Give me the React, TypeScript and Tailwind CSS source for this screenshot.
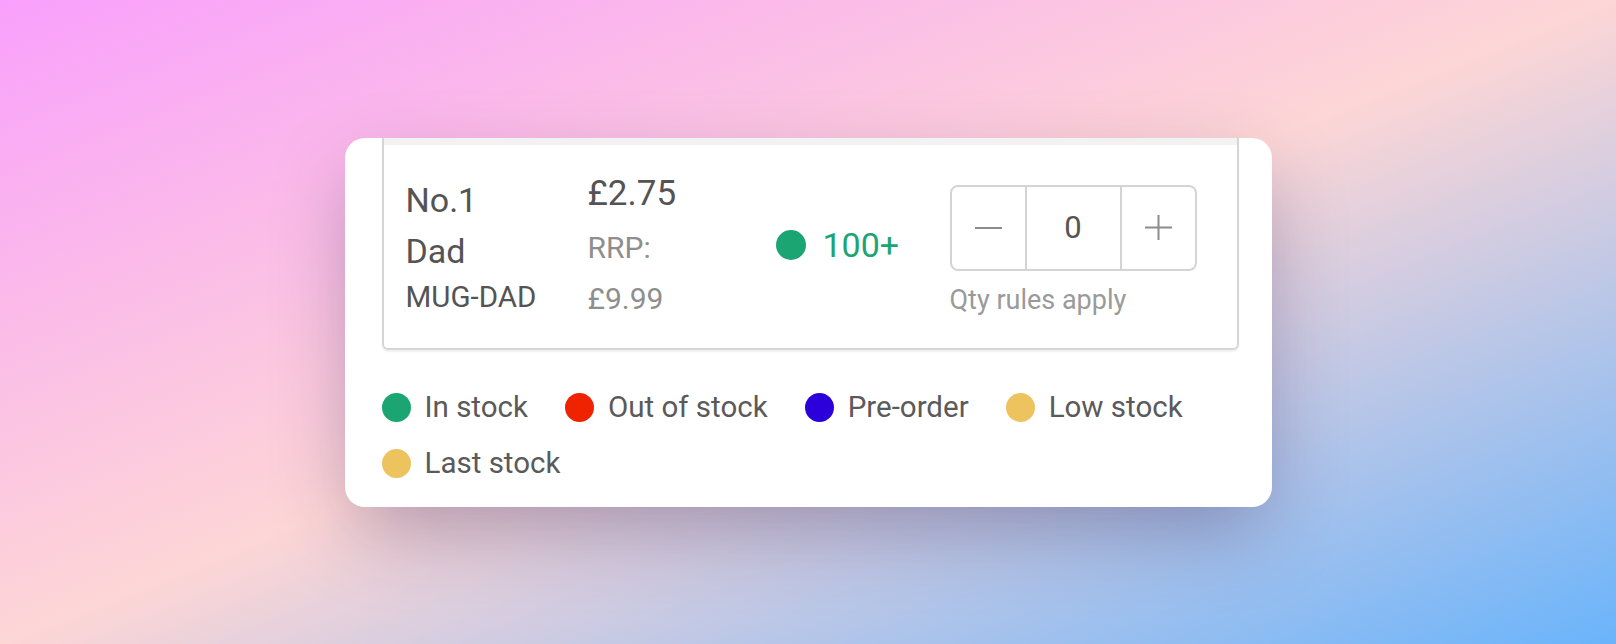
export default function App() {
  const legend = [
    { label: "In stock", color: "bg-[#1ba573]" },
    { label: "Out of stock", color: "bg-[#ef2300]" },
    { label: "Pre-order", color: "bg-[#2c00da]" },
    { label: "Low stock", color: "bg-[#ecc35f]" },
    { label: "Last stock", color: "bg-[#ecc35f]" },
  ];
  return (
    <div className="flex h-[644px] w-[1616px] items-center justify-center bg-[linear-gradient(to_bottom_right,#f9a0fc,#fdd6d6,#6ab4fb)] font-['Roboto',sans-serif]">
      <div className="h-[369px] w-[927px] overflow-hidden rounded-[20px] bg-white pl-[37px] pr-[33px] shadow-[0_30px_80px_-10px_rgba(40,30,80,0.35)]">
        <div className="rounded-b-[6px] border-x-2 border-b-2 border-[#d6d6d6] shadow-[0_2px_2px_rgba(0,0,0,0.06)]">
          <div className="h-[7px] bg-[#f2f2f2]" />
          <div className="flex h-[203px] items-start pl-[22px]">
            <div className="mt-[30px] w-[130px] text-[#545454]">
              <div className="text-[34px] leading-[51px]">No.1 Dad</div>
              <div className="whitespace-nowrap text-[29.5px] leading-[40px]">MUG-DAD</div>
            </div>
            <div className="ml-[52px] mt-[29px] w-[188px]">
              <div className="text-[35px] leading-[40px] text-[#545454]">£2.75</div>
              <div className="mt-[8px] text-[30px] leading-[51px] text-[#8e8e8e]">RRP:</div>
              <div className="text-[30px] leading-[51px] text-[#8e8e8e]">£9.99</div>
            </div>
            <div className="mt-[80px] flex w-[174px] items-center">
              <div className="h-[30px] w-[30px] rounded-full bg-[#1ba573]" />
              <div className="ml-[17px] text-[34px] leading-[40px] text-[#1ba573]">100+</div>
            </div>
            <div className="mt-[40px] flex flex-col">
              <div className="flex h-[86px] w-[247px] rounded-[8px] border-2 border-[#d4d4d4]">
                <div className="flex w-[75px] items-center justify-center border-r-2 border-[#d4d4d4]">
                  <div className="h-[2px] w-[27px] bg-[#8c8c8c]" />
                </div>
                <div className="flex w-[95px] items-center justify-center border-r-2 border-[#d4d4d4]">
                  <span className="text-[31px] leading-none text-[#555555]">0</span>
                </div>
                <div className="flex flex-1 items-center justify-center">
                  <svg width="27" height="27" viewBox="0 0 27 27">
                    <line x1="0" y1="13.5" x2="27" y2="13.5" stroke="#8c8c8c" strokeWidth="2" />
                    <line x1="13.5" y1="1" x2="13.5" y2="26" stroke="#8c8c8c" strokeWidth="2" />
                  </svg>
                </div>
              </div>
              <div className="mt-[14px] text-[27px] leading-[30px] text-[#9a9a9a]">Qty rules apply</div>
            </div>
          </div>
        </div>
        <div className="mt-[35px] flex flex-wrap gap-x-[37px] gap-y-[11px]">
          {legend.map((l) => (
            <div key={l.label} className="flex h-[45px] items-center">
              <div className={`h-[29px] w-[29px] rounded-full ${l.color}`} />
              <span className="ml-[14px] text-[29.5px] leading-[45px] text-[#5a5a5a]">{l.label}</span>
            </div>
          ))}
        </div>
      </div>
    </div>
  );
}
